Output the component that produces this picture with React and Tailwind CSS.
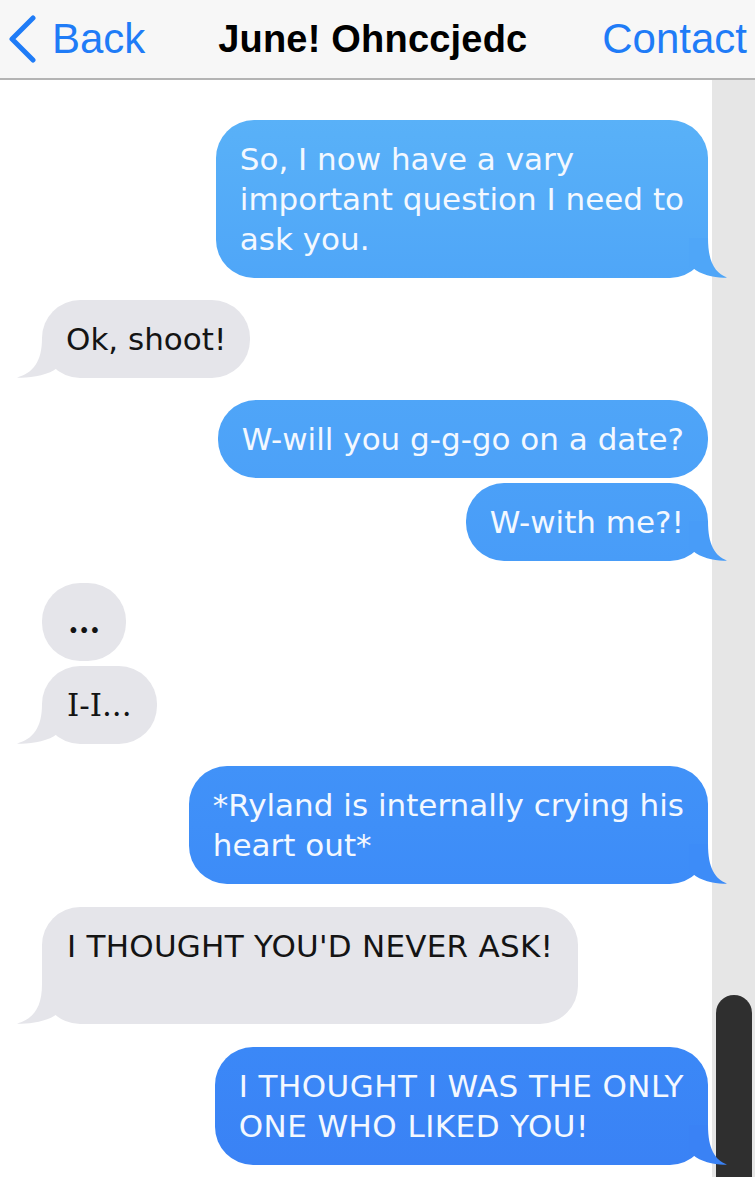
import React from 'react';

// tail drawn as a small svg hanging off the bubble's bottom corner
const Tail = ({ side, color }) =>
  side === 'right' ? (
    <svg width="38" height="40" viewBox="0 0 38 40" className="absolute bottom-0 right-[-19px]">
      <path d="M0 0 H19 C19 24 26 35 38 39.5 C28 40.5 12 37 4 30 L0 30 Z" fill={color} />
    </svg>
  ) : (
    <svg width="44" height="40" viewBox="0 0 44 40" className="absolute bottom-0 left-[-25px] -scale-x-100">
      <path d="M0 0 H19 C19 24 28 35 44 39.5 C32 40.5 12 37 4 30 L0 30 Z" fill={color} />
    </svg>
  );

const Bubble = ({ side, bg, tailColor, tail, className = '', children }) => (
  <div className={side === 'right' ? 'flex justify-end' : 'flex justify-start'}>
    <div
      className={`relative whitespace-nowrap rounded-[38px] px-[24px] py-[19px] text-[31px] leading-[40px] ${bg} ${className}`}
    >
      {tail && <Tail side={side} color={tailColor} />}
      <span className="relative">{children}</span>
    </div>
  </div>
);

const sent = 'text-[#f3f8ff] font-["DejaVu_Sans",Verdana,sans-serif]';
const recv = 'bg-[#e5e5ea] text-[#141414] font-["DejaVu_Sans",Verdana,sans-serif]';

const App = () => {
  return (
    <div className="h-[1177px] w-[755px] overflow-hidden bg-white flex flex-col">
      {/* Nav bar */}
      <header className="h-[80px] shrink-0 bg-[#f7f7f7] border-b-2 border-[#b4b4b4] flex items-center justify-between pl-[6px] pr-[8px] font-['Liberation_Sans',Arial,sans-serif]">
        <div className="flex items-center gap-[14px] text-[#1f7cf7]">
          <svg width="32" height="48" viewBox="0 0 32 48" fill="none">
            <path d="M27 3 L6 24 L27 45" stroke="#1f7cf7" strokeWidth="5" strokeLinecap="round" strokeLinejoin="round" />
          </svg>
          <span className="text-[42px] leading-none">Back</span>
        </div>
        <h1 className="text-[38px] font-bold text-black leading-none tracking-[0.2px] mr-[2px]">June! Ohnccjedc</h1>
        <span className="text-[42px] leading-none text-[#1f7cf7]">Contact</span>
      </header>

      <div className="flex flex-1 min-h-0">
        {/* Messages */}
        <main className="flex-1 pt-[40px] pl-[42px] pr-[4px] flex flex-col">
          <Bubble side="right" tail bg={`bg-linear-to-b from-[#59b1f8] to-[#4fa6f8] ${sent}`} tailColor="#4fa6f8">
            So, I now have a vary<br />important question I need to<br />ask you.
          </Bubble>

          <div className="mt-[22px]">
            <Bubble side="left" tail bg={recv} tailColor="#e5e5ea">Ok, shoot!</Bubble>
          </div>

          <div className="mt-[22px] flex flex-col gap-[5px]">
            <Bubble side="right" bg={`bg-linear-to-b from-[#4fa5f8] to-[#4ca1f8] ${sent}`}>
              W-will you g-g-go on a date?
            </Bubble>
            <Bubble side="right" tail bg={`bg-linear-to-b from-[#4ba0f8] to-[#489cf8] ${sent}`} tailColor="#489cf8">
              W-with me?!
            </Bubble>
          </div>

          <div className="mt-[22px] flex flex-col gap-[5px]">
            <Bubble side="left" bg={recv} className="font-['DejaVu_Serif',serif] px-[26px] font-bold">...</Bubble>
            <Bubble side="left" tail bg={recv} tailColor="#e5e5ea" className="font-['DejaVu_Serif',serif] px-[25px]">
              I-I...
            </Bubble>
          </div>

          <div className="mt-[22px]">
            <Bubble side="right" tail bg={`bg-linear-to-b from-[#4192f8] to-[#3d8cf8] ${sent}`} tailColor="#3d8cf8">
              *Ryland is internally crying his<br />heart out*
            </Bubble>
          </div>

          <div className="mt-[23px]">
            <Bubble side="left" tail bg={recv} tailColor="#e5e5ea" className="min-h-[117px] px-[25px] tracking-[0.25px]">
              I THOUGHT YOU'D NEVER ASK!
            </Bubble>
          </div>

          <div className="mt-[23px]">
            <Bubble side="right" tail bg={`bg-linear-to-b from-[#3b88f7] to-[#3a82f5] ${sent}`} tailColor="#3a82f5" className="tracking-[0.45px]">
              I THOUGHT I WAS THE ONLY<br />ONE WHO LIKED YOU!
            </Bubble>
          </div>
        </main>

        {/* Scroll track */}
        <div className="w-[43px] shrink-0 bg-[#e6e6e6] flex flex-col justify-end pl-[4px]">
          <div className="h-[182px] w-[36px] rounded-t-[18px] bg-[#2f2f2f]" />
        </div>
      </div>
    </div>
  );
};

export default App;
